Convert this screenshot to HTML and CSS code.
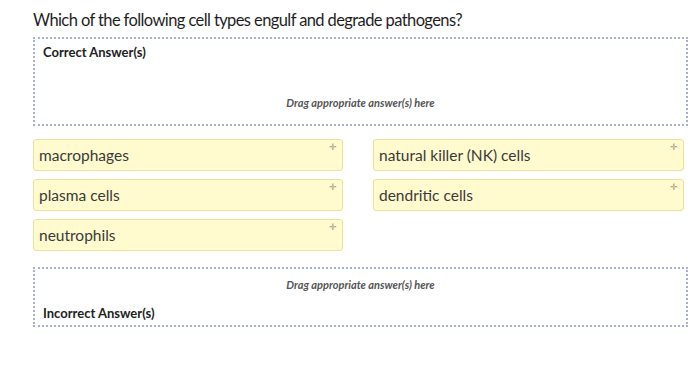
FILE: index.html
```html
<!DOCTYPE html>
<html lang="en">

<head>
    <meta charset="UTF-8">
    <title>Cell types question</title>
    <link rel="stylesheet" href="styles.css">
</head>

<body>
    <div class="question">
        <p class="prompt">Which of the following cell types engulf and degrade pathogens?</p>

        <!-- Correct drop zone -->
        <div class="drop-zone correct-zone">
            <div class="zone-title">Correct Answer(s)</div>
            <div class="zone-hint">Drag appropriate answer(s) here</div>
        </div>

        <!-- Answer choices -->
        <div class="choices">
            <div class="choice">macrophages<span class="grip">&#10011;</span></div>
            <div class="choice">natural killer (NK) cells<span class="grip">&#10011;</span></div>
            <div class="choice">plasma cells<span class="grip">&#10011;</span></div>
            <div class="choice">dendritic cells<span class="grip">&#10011;</span></div>
            <div class="choice">neutrophils<span class="grip">&#10011;</span></div>
        </div>

        <!-- Incorrect drop zone -->
        <div class="drop-zone incorrect-zone">
            <div class="zone-hint">Drag appropriate answer(s) here</div>
            <div class="zone-title">Incorrect Answer(s)</div>
        </div>
    </div>
</body>

</html>
```

FILE: styles.css
```css
body {
    margin: 0;
    background-color: #ffffff;
    font-family: "Lato", "Open Sans", sans-serif;
    color: #222;
}

.question {
    width: 655px;
    padding: 10px 0 0 33px;
}

.prompt {
    margin: 0 0 6px 0;
    font-size: 16.5px;
    line-height: 21px;
    letter-spacing: -0.6px;
    color: #1f1f1f;
}

.drop-zone {
    border: 2px dotted #a9aedb;
    display: flex;
    flex-direction: column;
}

.correct-zone {
    height: 85px;
    padding: 0 8px;
}

.incorrect-zone {
    height: 56px;
    padding: 0 8px;
}

.zone-title {
    font-size: 13px;
    font-weight: bold;
    color: #222;
}

.correct-zone .zone-title {
    margin-top: 5px;
}

.correct-zone .zone-hint {
    margin-top: 36px;
}

.incorrect-zone .zone-hint {
    margin-top: 9px;
}

.incorrect-zone .zone-title {
    margin-top: 14px;
}

.zone-hint {
    text-align: center;
    font-size: 11px;
    font-weight: bold;
    font-style: italic;
    color: #555;
}

.choices {
    display: grid;
    grid-template-columns: 310px 311px;
    column-gap: 30px;
    row-gap: 8px;
    margin: 13px 0 16px 0;
}

.choice {
    position: relative;
    height: 30px;
    line-height: 31px;
    padding-left: 5px;
    background-color: #fffbcf;
    border: 1px solid #ece39a;
    border-radius: 3px;
    font-size: 15.5px;
    color: #3a3a3a;
}

.grip {
    position: absolute;
    top: 0;
    right: 5px;
    line-height: 14px;
    font-size: 9px;
    color: #9a9a7a;
}
```
